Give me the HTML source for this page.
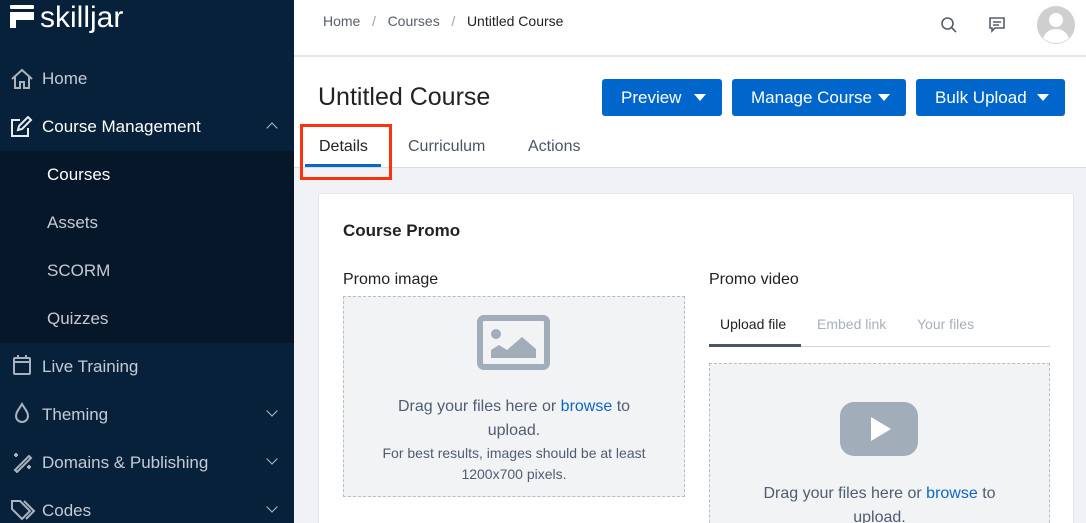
<!DOCTYPE html>
<html><head><meta charset="utf-8"><style>
*{box-sizing:border-box;margin:0;padding:0}
html,body{width:1086px;height:523px;overflow:hidden}
body{font-family:"Liberation Sans",sans-serif;background:#f0f2f5;position:relative}
.sb{position:absolute;left:0;top:0;width:294px;height:523px;background:#07213b;color:#c9d0d8;overflow:hidden}
.sub{position:absolute;left:0;top:151px;width:294px;height:192px;background:#06172a}
.it{position:absolute;left:42px;font-size:17px;line-height:20px;color:#c4cbd3}
.ic{position:absolute;left:10px}
.chev{position:absolute;left:268px;width:8px;height:8px;border-right:1.5px solid #b9c1ca;border-bottom:1.5px solid #b9c1ca;transform:rotate(45deg)}
.hdr{position:absolute;left:294px;top:0;width:792px;height:57px;background:#fff;border-bottom:2px solid #e4e6e9}
.ttl{position:absolute;left:294px;top:57px;width:792px;height:111px;background:#fff;border-bottom:1px solid #d8dce0}
.btn{position:absolute;top:79px;height:37px;background:#0066cc;color:#fff;border-radius:3px;font-size:17px;line-height:37px;padding-left:19px}
.btn:after{content:"";position:absolute;right:16px;top:15px;border-left:6px solid transparent;border-right:6px solid transparent;border-top:7px solid #fff}
.card{position:absolute;left:318px;top:193px;width:756px;height:330px;background:#fff;border:1px solid #e3e6ea;border-bottom:none;overflow:hidden}
.drop{position:absolute;background:#f2f3f5;border:1px dashed #b7bec8;text-align:center;color:#4f5d73}
a{color:#0b66c9;text-decoration:none}
</style></head><body>
<div class="sb">
 <div class="sub"></div>
 <svg style="position:absolute;left:10px;top:5px" width="26" height="24" viewBox="0 0 26 24"><rect x="0" y="0" width="24" height="4" rx="1" fill="#fff"/><path d="M0 7h24v16H0z M6 15v8h18v-8z" fill="#fff" fill-rule="evenodd"/></svg>
 <div style="position:absolute;left:40px;top:0px;font-size:30px;color:#fff;line-height:36px">skilljar</div>
 <svg class="ic" style="top:68px" width="24" height="22" viewBox="0 0 24 22" fill="none" stroke="#aab3bd" stroke-width="2"><path d="M2 11 12 2l10 9M5 9v11h5v-6h4v6h5V9"/></svg>
 <div class="it" style="top:69px">Home</div>
 <svg class="ic" style="top:116px" width="24" height="22" viewBox="0 0 24 22" fill="none" stroke="#e8ecf0" stroke-width="2"><path d="M10 4H2v16h16v-8M8 14l1-4 9-9 3 3-9 9z"/></svg>
 <div class="it" style="top:117px;color:#fff">Course Management</div>
 <div class="chev" style="top:124px;transform:rotate(225deg)"></div>
 <div class="it" style="left:47px;top:165px;color:#fff">Courses</div>
 <div class="it" style="left:47px;top:213px">Assets</div>
 <div class="it" style="left:47px;top:261px">SCORM</div>
 <div class="it" style="left:47px;top:309px">Quizzes</div>
 <svg class="ic" style="top:354px;left:12px" width="20" height="22" viewBox="0 0 20 22" fill="none" stroke="#aab3bd" stroke-width="2"><rect x="2" y="4" width="16" height="16" rx="1"/><path d="M2 8h16M6 1v4M14 1v4"/></svg>
 <div class="it" style="top:357px">Live Training</div>
 <svg class="ic" style="top:402px;left:14px" width="16" height="22" viewBox="0 0 16 22" fill="none" stroke="#aab3bd" stroke-width="2"><path d="M8 2C5 7 2 10 2 14a6 6 0 0 0 12 0C14 10 11 7 8 2z"/></svg>
 <div class="it" style="top:405px">Theming</div><div class="chev" style="top:407px"></div>
 <svg class="ic" style="top:451px;left:12px" width="22" height="22" viewBox="0 0 22 22" fill="none" stroke="#aab3bd" stroke-width="2"><path d="M3 19 17 5l2 2L5 21zM4 2v4M2 4h4M17 14v4M15 16h4"/></svg>
 <div class="it" style="top:453px">Domains &amp; Publishing</div><div class="chev" style="top:455px"></div>
 <svg class="ic" style="top:499px" width="26" height="24" viewBox="0 0 26 24" fill="none" stroke="#aab3bd" stroke-width="2"><path d="M2 2h8l10 10-8 8L2 10zM14 2l10 10-8 8"/></svg>
 <div class="it" style="top:501px">Codes</div><div class="chev" style="top:503px"></div>
</div>
<div class="hdr">
 <div style="position:absolute;left:29px;top:13px;font-size:14px;color:#555e6b">Home &nbsp; <span style="color:#9aa2ad">/</span> &nbsp; Courses &nbsp; <span style="color:#9aa2ad">/</span> &nbsp; <span style="color:#222">Untitled Course</span></div>
 <svg style="position:absolute;left:646px;top:16px" width="18" height="18" viewBox="0 0 18 18" fill="none" stroke="#555e6b" stroke-width="1.6"><circle cx="7.5" cy="7.5" r="5.5"/><path d="M11.5 11.5 16 16"/></svg>
 <svg style="position:absolute;left:694px;top:16px" width="18" height="18" viewBox="0 0 18 18" fill="none" stroke="#555e6b" stroke-width="1.6"><path d="M2 2h14v10H7l-3 3v-3H2z M5 6h8M5 9h6"/></svg>
 <svg style="position:absolute;left:742px;top:5px" width="40" height="40" viewBox="0 0 40 40"><circle cx="20" cy="20" r="19" fill="#cfcfcf"/><circle cx="20" cy="15" r="7" fill="#fff"/><path d="M7 33c3-7 8-9 13-9s10 2 13 9a19 19 0 0 1-26 0z" fill="#fff"/></svg>
</div>
<div class="ttl">
 <div style="position:absolute;left:24px;top:26px;font-size:25px;color:#222">Untitled Course</div>
 <div style="position:absolute;left:25px;top:81px;font-size:16px;color:#222">Details</div>
 <div style="position:absolute;left:11px;top:107px;width:76px;height:3px;background:#0b66c9"></div>
 <div style="position:absolute;left:6px;top:67px;width:92px;height:56px;border:3px solid #fa3210"></div>
 <div style="position:absolute;left:114px;top:81px;font-size:16px;color:#4b5568">Curriculum</div>
 <div style="position:absolute;left:234px;top:81px;font-size:16px;color:#4b5568">Actions</div>
</div>
<div class="btn" style="left:602px;width:120px">Preview</div>
<div class="btn" style="left:732px;width:174px">Manage Course</div>
<div class="btn" style="left:916px;width:149px">Bulk Upload</div>
<div class="card">
 <div style="position:absolute;left:24px;top:27px;font-size:17px;font-weight:bold;color:#222">Course Promo</div>
 <div style="position:absolute;left:24px;top:77px;font-size:16px;color:#222">Promo image</div>
 <div class="drop" style="left:24px;top:102px;width:342px;height:201px">
  <svg style="position:absolute;left:133px;top:18px" width="75" height="57" viewBox="0 0 75 57"><rect x="3" y="3" width="67" height="49" rx="4" fill="none" stroke="#a2adba" stroke-width="6"/><circle cx="19" cy="19" r="5" fill="#a2adba"/><path d="M14 43V35l8-5 8 5 15-13 14 12v9z" fill="#a2adba"/></svg>
  <div style="position:absolute;left:0;width:100%;top:98px;font-size:16px;line-height:24px">Drag your files here or <a>browse</a> to<br>upload.</div>
  <div style="position:absolute;left:0;width:100%;top:146px;font-size:14px;line-height:21px">For best results, images should be at least<br>1200x700 pixels.</div>
 </div>
 <div style="position:absolute;left:390px;top:77px;font-size:16px;color:#222">Promo video</div>
 <div style="position:absolute;left:401px;top:122px;font-size:14px;color:#222">Upload file</div>
 <div style="position:absolute;left:498px;top:122px;font-size:14px;color:#a8b0ba">Embed link</div>
 <div style="position:absolute;left:598px;top:122px;font-size:14px;color:#a8b0ba">Your files</div>
 <div style="position:absolute;left:390px;top:152px;width:341px;height:1px;background:#cfd4da"></div>
 <div style="position:absolute;left:390px;top:150px;width:92px;height:3px;background:#4a5568"></div>
 <div class="drop" style="left:390px;top:169px;width:341px;height:200px">
  <svg style="position:absolute;left:130px;top:38px" width="80" height="56" viewBox="0 0 80 56"><rect x="0" y="0" width="78" height="54" rx="14" fill="#a2adba"/><path d="M31 15v24l20-12z" fill="#fff"/></svg>
  <div style="position:absolute;left:0;width:100%;top:118px;font-size:16px;line-height:24px">Drag your files here or <a>browse</a> to<br>upload.</div>
 </div>
</div>
</body></html>
